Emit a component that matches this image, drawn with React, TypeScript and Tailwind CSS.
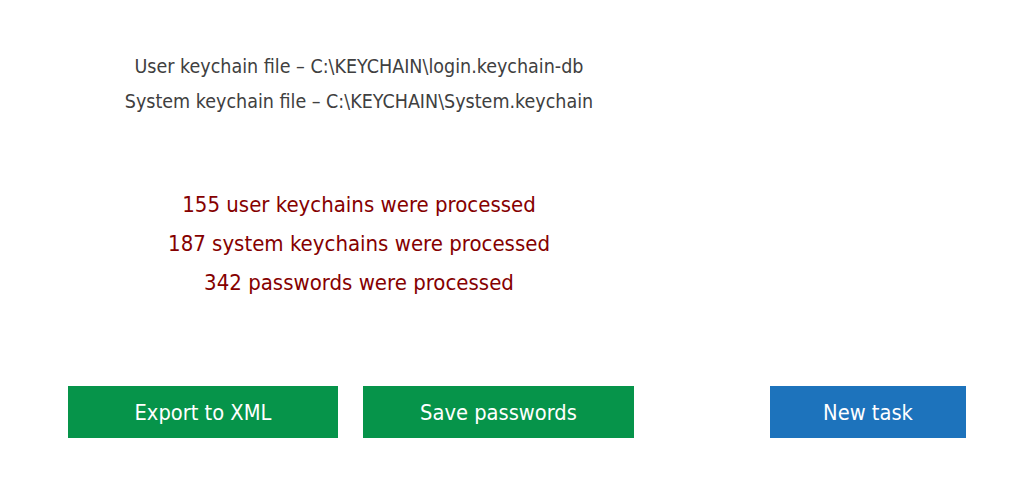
export default function App() {
  const font = { fontFamily: '"DejaVu Sans Condensed", "DejaVu Sans", sans-serif' };
  return (
    <div className="w-[1024px] h-[484px] bg-white flex flex-col" style={font}>
      <div className="w-[718px] flex flex-col items-center text-[#404040] text-[19.5px] pt-[54px]">
        <div className="h-[35px] leading-[26px]">User keychain file – C:\KEYCHAIN\login.keychain-db</div>
        <div className="h-[35px] leading-[26px]">System keychain file – C:\KEYCHAIN\System.keychain</div>
      </div>
      <div className="w-[718px] flex flex-col items-center text-[#850000] text-[22px] pt-[67px]">
        <div className="h-[39px] leading-[28px]">155 user keychains were processed</div>
        <div className="h-[39px] leading-[28px]">187 system keychains were processed</div>
        <div className="h-[39px] leading-[28px]">342 passwords were processed</div>
      </div>
      <div className="flex pl-[68px] pt-[78px] text-white text-[21.7px]">
        <button className="w-[270px] h-[52px] bg-[#06944a] flex items-center justify-center pt-[2px]">Export to XML</button>
        <button className="ml-[25px] w-[271px] h-[52px] bg-[#06944a] flex items-center justify-center pt-[2px]">Save passwords</button>
        <button className="ml-[136px] w-[196px] h-[52px] bg-[#1d73bc] flex items-center justify-center pt-[2px]">New task</button>
      </div>
    </div>
  );
}
